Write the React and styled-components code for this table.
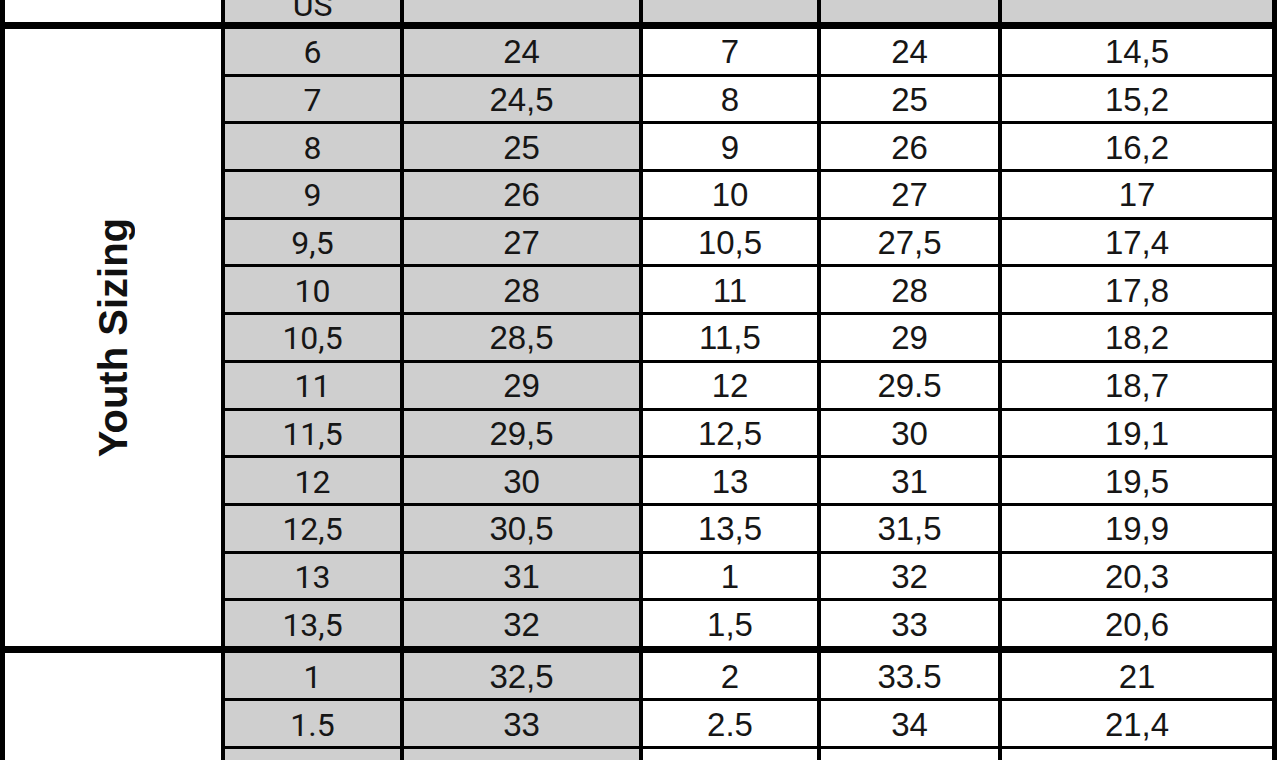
import React from "react";
import styled, { createGlobalStyle } from "styled-components";

const Global = createGlobalStyle`
  html, body {
    margin: 0;
    padding: 0;
    background: #ffffff;
    overflow: hidden;
  }
  * { box-sizing: border-box; }
`;

const COLS = "216px 175px 235px 174px 177px 270px";
const GREY = "#cfcfcf";

const Sheet = styled.div`
  width: 1277px;
  border-left: 5px solid #000;
  border-right: 5px solid #000;
  background: #000;
  display: flex;
  flex-direction: column;
  gap: 7px;
`;

const HeaderRow = styled.div`
  display: grid;
  grid-template-columns: ${COLS};
  column-gap: 4px;
  height: 22px;
`;

const HeadCell = styled.div`
  background: ${(p) => (p.$shade ? GREY : "#fff")};
  display: flex;
  align-items: flex-end;
  justify-content: center;
  overflow: hidden;
  padding-bottom: 1px;
  font-family: Roboto, "Liberation Sans", sans-serif;
  font-size: 32px;
  line-height: 32px;
  color: #161616;
`;

const Section = styled.div`
  display: grid;
  grid-template-columns: ${COLS};
  grid-template-rows: ${(p) => p.$rows};
  column-gap: 4px;
  row-gap: 3px;
  height: ${(p) => p.$height};
`;

const LabelCell = styled.div`
  grid-column: 1;
  grid-row: 1 / -1;
  background: #fff;
  display: flex;
  align-items: center;
  justify-content: center;
`;

const Label = styled.span`
  writing-mode: vertical-rl;
  transform: rotate(180deg);
  font-family: "Liberation Sans", Arial, sans-serif;
  font-weight: 700;
  font-size: 40px;
  color: #111;
  white-space: nowrap;
`;

const Cell = styled.div`
  background: ${(p) => (p.$shade ? GREY : "#fff")};
  display: flex;
  align-items: center;
  justify-content: center;
  font-family: ${(p) =>
    p.$roboto
      ? `Roboto, "Liberation Sans", sans-serif`
      : `"Liberation Sans Narrow", "Liberation Sans", Arial, sans-serif`};
  font-size: ${(p) => (p.$roboto ? "32px" : "33px")};
  color: #161616;
  padding-top: 2px;
`;

const youth = [
  ["6", "24", "7", "24", "14,5"],
  ["7", "24,5", "8", "25", "15,2"],
  ["8", "25", "9", "26", "16,2"],
  ["9", "26", "10", "27", "17"],
  ["9,5", "27", "10,5", "27,5", "17,4"],
  ["10", "28", "11", "28", "17,8"],
  ["10,5", "28,5", "11,5", "29", "18,2"],
  ["11", "29", "12", "29.5", "18,7"],
  ["11,5", "29,5", "12,5", "30", "19,1"],
  ["12", "30", "13", "31", "19,5"],
  ["12,5", "30,5", "13,5", "31,5", "19,9"],
  ["13", "31", "1", "32", "20,3"],
  ["13,5", "32", "1,5", "33", "20,6"],
];

const adult = [
  ["1", "32,5", "2", "33.5", "21"],
  ["1.5", "33", "2.5", "34", "21,4"],
  ["2", "34", "3", "35", "21,8"],
];

function Rows({ data }) {
  return data.map((row, r) =>
    row.map((v, c) => (
      <Cell
        key={`${r}-${c}`}
        $shade={c < 2}
        $roboto={c === 0}
        style={{ gridRow: r + 1, gridColumn: c + 2 }}
      >
        {v}
      </Cell>
    ))
  );
}

export default function App() {
  return (
    <>
      <Global />
      <Sheet>
        <HeaderRow>
          <HeadCell />
          <HeadCell $shade>US</HeadCell>
          <HeadCell $shade />
          <HeadCell $shade />
          <HeadCell $shade />
          <HeadCell $shade />
        </HeaderRow>
        <Section $rows="repeat(13, 1fr)" $height="617px">
          <LabelCell>
            <Label>Youth Sizing</Label>
          </LabelCell>
          <Rows data={youth} />
        </Section>
        <Section $rows="repeat(3, 45px)" $height="141px">
          <LabelCell />
          <Rows data={adult} />
        </Section>
      </Sheet>
    </>
  );
}
